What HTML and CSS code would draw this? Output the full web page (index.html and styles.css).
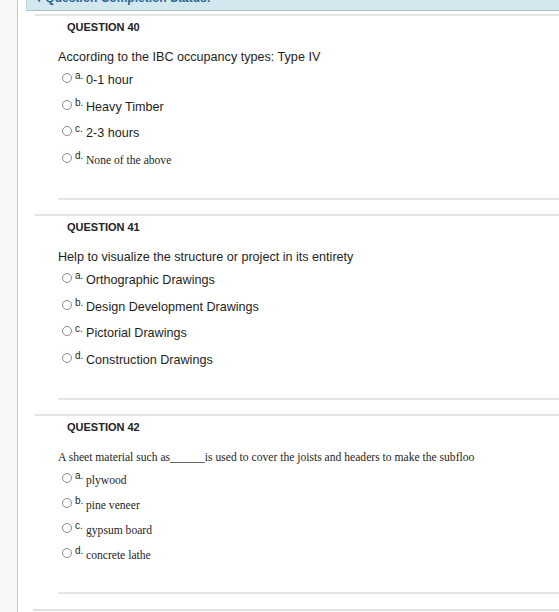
FILE: index.html
```html
<!DOCTYPE html>
<html>
<head>
<meta charset="utf-8">
<link rel="stylesheet" href="styles.css">
</head>
<body>
<div class="page">
  <div class="sidebar"></div>
  <div class="main">
    <div class="banner"><div class="banner-text">&#9662; Question Completion Status:</div></div>

    <div class="question">
      <div class="q-head">QUESTION 40</div>
      <div class="q-body">
        <div class="q-text">According to the IBC occupancy types: Type IV</div>
        <div class="opt"><span class="radio"></span><span class="letter">a.</span><span class="ans">0-1 hour</span></div>
        <div class="opt"><span class="radio"></span><span class="letter">b.</span><span class="ans">Heavy Timber</span></div>
        <div class="opt"><span class="radio"></span><span class="letter">c.</span><span class="ans">2-3 hours</span></div>
        <div class="opt"><span class="radio"></span><span class="letter">d.</span><span class="ans serif">None of the above</span></div>
      </div>
    </div>

    <div class="question">
      <div class="q-head">QUESTION 41</div>
      <div class="q-body">
        <div class="q-text">Help to visualize the structure or project in its entirety</div>
        <div class="opt"><span class="radio"></span><span class="letter">a.</span><span class="ans">Orthographic Drawings</span></div>
        <div class="opt"><span class="radio"></span><span class="letter">b.</span><span class="ans">Design Development Drawings</span></div>
        <div class="opt"><span class="radio"></span><span class="letter">c.</span><span class="ans">Pictorial Drawings</span></div>
        <div class="opt"><span class="radio"></span><span class="letter">d.</span><span class="ans">Construction Drawings</span></div>
      </div>
    </div>

    <div class="question q-serif">
      <div class="q-head">QUESTION 42</div>
      <div class="q-body">
        <div class="q-text serif">A sheet material such as______is used to cover the joists and headers to make the subfloo</div>
        <div class="opt"><span class="radio"></span><span class="letter">a.</span><span class="ans serif">plywood</span></div>
        <div class="opt"><span class="radio"></span><span class="letter">b.</span><span class="ans serif">pine veneer</span></div>
        <div class="opt"><span class="radio"></span><span class="letter">c.</span><span class="ans serif">gypsum board</span></div>
        <div class="opt"><span class="radio"></span><span class="letter">d.</span><span class="ans serif">concrete lathe</span></div>
      </div>
    </div>
    <div class="end-rule"></div>
  </div>
</div>
</body>
</html>
```
FILE: styles.css
```css
html, body {
  margin: 0;
  padding: 0;
  background: #fff;
}
body {
  font-family: "Liberation Sans", Arial, sans-serif;
  color: #1e1e1e;
  overflow: hidden;
}
.page {
  display: flex;
  min-height: 612px;
}
.sidebar {
  width: 17px;
  flex: none;
  background: #f7f7f7;
  border-right: 1px solid #c9c9c9;
}
.main {
  flex: 1;
  min-width: 0;
}
.banner {
  margin-left: 8px;
  height: 10px;
  background: #d3e8ee;
  border-bottom: 1px solid #aac3cb;
  border-left: 1px solid #c3d8df;
  overflow: hidden;
}
.banner-text {
  margin-top: -9px;
  padding-left: 9px;
  font-size: 12px;
  line-height: 14px;
  font-weight: bold;
  color: #2a6496;
}
.question {
  margin-left: 17px;
  margin-top: 3px;
  border-top: 2px solid #e4e4e4;
}
.question + .question {
  margin-top: 14px;
}
.end-rule {
  margin: 15px 0 0 15px;
  border-top: 2px solid #e0e0e0;
}
.q-head {
  padding: 4px 0 0 32px;
  font-size: 11px;
  line-height: 14px;
  font-weight: bold;
  color: #222;
}
.q-body {
  margin-left: 23px;
  padding-top: 16px;
  padding-bottom: 21px;
  border-bottom: 2px solid #e4e4e4;
}
.q-text {
  font-size: 12.6px;
  line-height: 15px;
  margin-bottom: 6px;
  white-space: nowrap;
}
.q-text.serif {
  font-family: "Liberation Serif", "Times New Roman", serif;
  font-size: 11.6px;
  line-height: 15px;
}
.opt {
  display: flex;
  align-items: flex-start;
  height: 26.5px;
}
.q-serif .opt {
  height: 25px;
}
.radio {
  flex: none;
  width: 8px;
  height: 8px;
  margin: 2px 0 0 4px;
  border: 1px solid #8a8a8a;
  border-radius: 50%;
  background: #fff;
}
.letter {
  font-size: 10px;
  line-height: 10px;
  margin: 0 0 0 3px;
  width: 11px;
}
.ans {
  font-size: 12.6px;
  line-height: 15px;
  padding-top: 2px;
}
.ans.serif {
  font-family: "Liberation Serif", "Times New Roman", serif;
  font-size: 11.6px;
  padding-top: 2px;
}
```
